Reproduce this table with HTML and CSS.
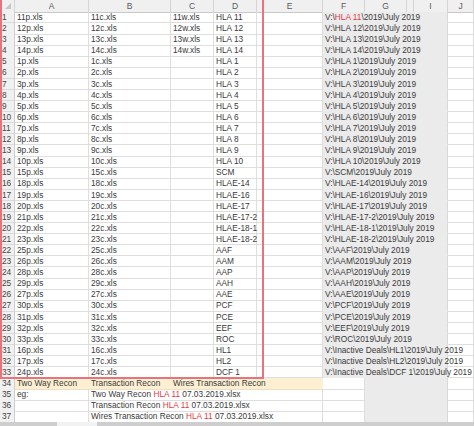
FILE: index.html
```html
<!DOCTYPE html>
<html>
<head>
<meta charset="utf-8">
<link rel="stylesheet" href="styles.css">
</head>
<body>
<div class="sheet">
  <div class="row head">
    <div class="cell corner"><svg width="14" height="11" viewBox="0 0 14 11"><polygon points="11,3 11,9 5,9" fill="#c6c6c6"/></svg></div>
    <div class="cell">A</div><div class="cell">B</div><div class="cell">C</div><div class="cell">D</div><div class="cell">E</div><div class="cell">F</div><div class="cell">G</div><div class="cell"></div><div class="cell">I</div><div class="cell">J</div>
  </div>
  <div class="row"><div class="cell num">1</div><div class="cell">11p.xls</div><div class="cell">11c.xls</div><div class="cell">11w.xls</div><div class="cell">HLA 11</div><div class="cell"></div><div class="cell sel">V:\<span class="red">HLA 11</span>\2019\July 2019</div><div class="cell"></div></div>
  <div class="row"><div class="cell num">2</div><div class="cell">12p.xls</div><div class="cell">12c.xls</div><div class="cell">12w.xls</div><div class="cell">HLA 12</div><div class="cell"></div><div class="cell sel">V:\HLA 12\2019\July 2019</div><div class="cell"></div></div>
  <div class="row"><div class="cell num">3</div><div class="cell">13p.xls</div><div class="cell">13c.xls</div><div class="cell">13w.xls</div><div class="cell">HLA 13</div><div class="cell"></div><div class="cell sel">V:\HLA 13\2019\July 2019</div><div class="cell"></div></div>
  <div class="row"><div class="cell num">4</div><div class="cell">14p.xls</div><div class="cell">14c.xls</div><div class="cell">14w.xls</div><div class="cell">HLA 14</div><div class="cell"></div><div class="cell sel">V:\HLA 14\2019\July 2019</div><div class="cell"></div></div>
  <div class="row"><div class="cell num">5</div><div class="cell">1p.xls</div><div class="cell">1c.xls</div><div class="cell"></div><div class="cell">HLA 1</div><div class="cell"></div><div class="cell sel">V:\HLA 1\2019\July 2019</div><div class="cell"></div></div>
  <div class="row"><div class="cell num">6</div><div class="cell">2p.xls</div><div class="cell">2c.xls</div><div class="cell"></div><div class="cell">HLA 2</div><div class="cell"></div><div class="cell sel">V:\HLA 2\2019\July 2019</div><div class="cell"></div></div>
  <div class="row"><div class="cell num">7</div><div class="cell">3p.xls</div><div class="cell">3c.xls</div><div class="cell"></div><div class="cell">HLA 3</div><div class="cell"></div><div class="cell sel">V:\HLA 3\2019\July 2019</div><div class="cell"></div></div>
  <div class="row"><div class="cell num">8</div><div class="cell">4p.xls</div><div class="cell">4c.xls</div><div class="cell"></div><div class="cell">HLA 4</div><div class="cell"></div><div class="cell sel">V:\HLA 4\2019\July 2019</div><div class="cell"></div></div>
  <div class="row"><div class="cell num">9</div><div class="cell">5p.xls</div><div class="cell">5c.xls</div><div class="cell"></div><div class="cell">HLA 5</div><div class="cell"></div><div class="cell sel">V:\HLA 5\2019\July 2019</div><div class="cell"></div></div>
  <div class="row"><div class="cell num">10</div><div class="cell">6p.xls</div><div class="cell">6c.xls</div><div class="cell"></div><div class="cell">HLA 6</div><div class="cell"></div><div class="cell sel">V:\HLA 6\2019\July 2019</div><div class="cell"></div></div>
  <div class="row"><div class="cell num">11</div><div class="cell">7p.xls</div><div class="cell">7c.xls</div><div class="cell"></div><div class="cell">HLA 7</div><div class="cell"></div><div class="cell sel">V:\HLA 7\2019\July 2019</div><div class="cell"></div></div>
  <div class="row"><div class="cell num">12</div><div class="cell">8p.xls</div><div class="cell">8c.xls</div><div class="cell"></div><div class="cell">HLA 8</div><div class="cell"></div><div class="cell sel">V:\HLA 8\2019\July 2019</div><div class="cell"></div></div>
  <div class="row"><div class="cell num">13</div><div class="cell">9p.xls</div><div class="cell">9c.xls</div><div class="cell"></div><div class="cell">HLA 9</div><div class="cell"></div><div class="cell sel">V:\HLA 9\2019\July 2019</div><div class="cell"></div></div>
  <div class="row"><div class="cell num">14</div><div class="cell">10p.xls</div><div class="cell">10c.xls</div><div class="cell"></div><div class="cell">HLA 10</div><div class="cell"></div><div class="cell sel">V:\HLA 10\2019\July 2019</div><div class="cell"></div></div>
  <div class="row"><div class="cell num">15</div><div class="cell">15p.xls</div><div class="cell">15c.xls</div><div class="cell"></div><div class="cell">SCM</div><div class="cell"></div><div class="cell sel">V:\SCM\2019\July 2019</div><div class="cell"></div></div>
  <div class="row"><div class="cell num">16</div><div class="cell">18p.xls</div><div class="cell">18c.xls</div><div class="cell"></div><div class="cell">HLAE-14</div><div class="cell"></div><div class="cell sel">V:\HLAE-14\2019\July 2019</div><div class="cell"></div></div>
  <div class="row"><div class="cell num">17</div><div class="cell">19p.xls</div><div class="cell">19c.xls</div><div class="cell"></div><div class="cell">HLAE-16</div><div class="cell"></div><div class="cell sel">V:\HLAE-16\2019\July 2019</div><div class="cell"></div></div>
  <div class="row"><div class="cell num">18</div><div class="cell">20p.xls</div><div class="cell">20c.xls</div><div class="cell"></div><div class="cell">HLAE-17</div><div class="cell"></div><div class="cell sel">V:\HLAE-17\2019\July 2019</div><div class="cell"></div></div>
  <div class="row"><div class="cell num">19</div><div class="cell">21p.xls</div><div class="cell">21c.xls</div><div class="cell"></div><div class="cell">HLAE-17-2</div><div class="cell"></div><div class="cell sel">V:\HLAE-17-2\2019\July 2019</div><div class="cell"></div></div>
  <div class="row"><div class="cell num">20</div><div class="cell">22p.xls</div><div class="cell">22c.xls</div><div class="cell"></div><div class="cell">HLAE-18-1</div><div class="cell"></div><div class="cell sel">V:\HLAE-18-1\2019\July 2019</div><div class="cell"></div></div>
  <div class="row"><div class="cell num">21</div><div class="cell">23p.xls</div><div class="cell">23c.xls</div><div class="cell"></div><div class="cell">HLAE-18-2</div><div class="cell"></div><div class="cell sel">V:\HLAE-18-2\2019\July 2019</div><div class="cell"></div></div>
  <div class="row"><div class="cell num">22</div><div class="cell">25p.xls</div><div class="cell">25c.xls</div><div class="cell"></div><div class="cell">AAF</div><div class="cell"></div><div class="cell sel">V:\AAF\2019\July 2019</div><div class="cell"></div></div>
  <div class="row"><div class="cell num">23</div><div class="cell">26p.xls</div><div class="cell">26c.xls</div><div class="cell"></div><div class="cell">AAM</div><div class="cell"></div><div class="cell sel">V:\AAM\2019\July 2019</div><div class="cell"></div></div>
  <div class="row"><div class="cell num">24</div><div class="cell">28p.xls</div><div class="cell">28c.xls</div><div class="cell"></div><div class="cell">AAP</div><div class="cell"></div><div class="cell sel">V:\AAP\2019\July 2019</div><div class="cell"></div></div>
  <div class="row"><div class="cell num">25</div><div class="cell">29p.xls</div><div class="cell">29c.xls</div><div class="cell"></div><div class="cell">AAH</div><div class="cell"></div><div class="cell sel">V:\AAH\2019\July 2019</div><div class="cell"></div></div>
  <div class="row"><div class="cell num">26</div><div class="cell">27p.xls</div><div class="cell">27c.xls</div><div class="cell"></div><div class="cell">AAE</div><div class="cell"></div><div class="cell sel">V:\AAE\2019\July 2019</div><div class="cell"></div></div>
  <div class="row"><div class="cell num">27</div><div class="cell">30p.xls</div><div class="cell">30c.xls</div><div class="cell"></div><div class="cell">PCF</div><div class="cell"></div><div class="cell sel">V:\PCF\2019\July 2019</div><div class="cell"></div></div>
  <div class="row"><div class="cell num">28</div><div class="cell">31p.xls</div><div class="cell">31c.xls</div><div class="cell"></div><div class="cell">PCE</div><div class="cell"></div><div class="cell sel">V:\PCE\2019\July 2019</div><div class="cell"></div></div>
  <div class="row"><div class="cell num">29</div><div class="cell">32p.xls</div><div class="cell">32c.xls</div><div class="cell"></div><div class="cell">EEF</div><div class="cell"></div><div class="cell sel">V:\EEF\2019\July 2019</div><div class="cell"></div></div>
  <div class="row"><div class="cell num">30</div><div class="cell">33p.xls</div><div class="cell">33c.xls</div><div class="cell"></div><div class="cell">ROC</div><div class="cell"></div><div class="cell sel">V:\ROC\2019\July 2019</div><div class="cell"></div></div>
  <div class="row"><div class="cell num">31</div><div class="cell">16p.xls</div><div class="cell">16c.xls</div><div class="cell"></div><div class="cell">HL1</div><div class="cell"></div><div class="cell sel">V:\Inactive Deals\HL1\2019\July 2019</div><div class="cell"></div></div>
  <div class="row"><div class="cell num">32</div><div class="cell">17p.xls</div><div class="cell">17c.xls</div><div class="cell"></div><div class="cell">HL2</div><div class="cell"></div><div class="cell sel">V:\Inactive Deals\HL2\2019\July 2019</div><div class="cell"></div></div>
  <div class="row"><div class="cell num">33</div><div class="cell">24p.xls</div><div class="cell">24c.xls</div><div class="cell"></div><div class="cell">DCF 1</div><div class="cell"></div><div class="cell sel">V:\Inactive Deals\DCF 1\2019\July 2019</div><div class="cell"></div></div>
  <div class="row"><div class="cell num">34</div><div class="cell yl">Two Way Recon</div><div class="cell yl">Transaction Recon</div><div class="cell yl span3">Wires Transaction Recon</div><div class="cell"></div><div class="cell grey span3"></div><div class="cell"></div></div>
  <div class="row"><div class="cell num">35</div><div class="cell">eg:</div><div class="cell span4">Two Way Recon <span class="red">HLA 11</span> 07.03.2019.xlsx</div><div class="cell"></div><div class="cell grey span3"></div><div class="cell"></div></div>
  <div class="row"><div class="cell num">36</div><div class="cell"></div><div class="cell span4">Transaction Recon <span class="red">HLA 11</span> 07.03.2019.xlsx</div><div class="cell"></div><div class="cell grey span3"></div><div class="cell"></div></div>
  <div class="row"><div class="cell num">37</div><div class="cell"></div><div class="cell span4">Wires Transaction Recon <span class="red">HLA 11</span> 07.03.2019.xlsx</div><div class="cell"></div><div class="cell grey span3"></div><div class="cell"></div></div>
  <div class="tabs"><div class="tab"></div></div>
  <div class="frame"></div>
</div>
</body>
</html>
```
FILE: styles.css
```css
html, body {
  margin: 0;
  padding: 0;
  background: #fff;
  overflow: hidden;
}
body {
  font-family: "Liberation Sans", Arial, sans-serif;
  font-size: 8.3px;
  color: #3a3a3a;
}
.sheet {
  position: relative;
  display: flex;
  flex-direction: column;
  width: 474px;
  height: 426px;
}
.row {
  display: grid;
  grid-template-columns: 15px 74px 82px 43px 43px 66px 42px 42px 7px 34px 1fr;
  height: 11.1px;
  flex: none;
}
.cell {
  box-sizing: border-box;
  border-right: 1px solid #dedede;
  border-bottom: 1px solid #dedede;
  padding: 0 2px;
  white-space: nowrap;
  line-height: 10.4px;
  min-width: 0;
}
.head {
  height: 12px;
}
.head .cell {
  background: #f0f0f0;
  color: #5a5a5a;
  text-align: center;
  line-height: 12px;
  font-size: 8.5px;
  border-right: 1px solid #d4d4d4;
  border-bottom: 1px solid #c9c9c9;
  padding: 0;
}
.head .corner {
  line-height: 0;
}
.num {
  background: #f1f1f1;
  color: #444;
  padding: 0 0 0 2px;
  border-right: 1px solid #cdcdcd;
  border-bottom-color: #dadada;
}
.sel {
  grid-column: span 4;
  background: #ebebeb;
  border-bottom-color: #ebebeb;
  border-right-color: #d8d8d8;
}
.grey {
  background: #ebebeb;
  border-bottom-color: #ebebeb;
  border-right-color: #d8d8d8;
}
.span3 {
  grid-column: span 3;
}
.span4 {
  grid-column: span 4;
}
.yl {
  background: #fcefd2;
  border-right-color: #fcefd2;
  border-bottom-color: #ecdfc4;
}
.red {
  color: #e53a40;
}
.tabs {
  flex: 1;
  display: flex;
  background: #cecece;
}
.tab {
  margin-left: 57px;
  width: 40px;
  background: #f2f2f2;
}
.frame {
  position: absolute;
  left: 0;
  top: 0;
  width: 264px;
  height: 379px;
  box-sizing: border-box;
  border: 2px solid #e9737d;
  border-top: none;
  pointer-events: none;
}
```
